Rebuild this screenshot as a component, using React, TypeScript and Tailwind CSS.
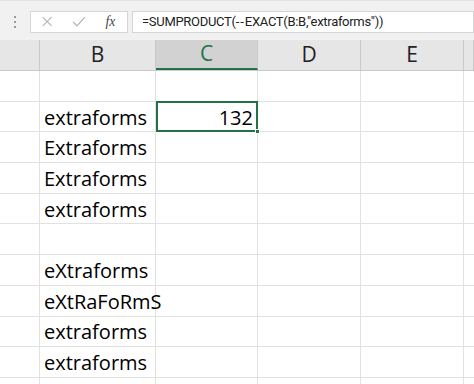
import React from "react";

const rows: { b: string; c?: string }[] = [
  { b: "" },
  { b: "extraforms", c: "132" },
  { b: "Extraforms" },
  { b: "Extraforms" },
  { b: "extraforms" },
  { b: "" },
  { b: "eXtraforms" },
  { b: "eXtRaFoRmS" },
  { b: "extraforms" },
  { b: "extraforms" },
  { b: "" },
];

const font = { fontFamily: '"Open Sans", "Noto Sans", sans-serif' };

const FormulaBar: React.FC = () => (
  <div className="h-[37px] bg-[#f1f1f1] border-t border-[#e4e4e4] flex items-start pt-[10px]">
    <div className="w-[30px] flex flex-col items-center gap-[3px] pt-[5px]">
      <span className="w-[2px] h-[2px] bg-[#9a9a9a]" />
      <span className="w-[2px] h-[2px] bg-[#9a9a9a]" />
      <span className="w-[2px] h-[2px] bg-[#9a9a9a]" />
    </div>
    <div className="w-[98px] h-[22px] bg-white border border-[#d6d6d6] flex items-center">
      <svg width="98" height="22" viewBox="0 0 98 22">
        <path d="M12 6 L21 15 M21 6 L12 15" stroke="#b5b5b5" strokeWidth="1.2" fill="none" />
        <path d="M43 11 L47 15 L55 6" stroke="#b5b5b5" strokeWidth="1.3" fill="none" />
        <text
          x="76"
          y="15.5"
          fontFamily='"Liberation Serif", serif'
          fontStyle="italic"
          fontSize="14"
          fill="#444"
        >
          fx
        </text>
      </svg>
    </div>
    <div
      className="ml-[4px] flex-1 h-[22px] bg-white border border-[#d6d6d6] pl-[9px] flex items-center text-[13px] tracking-[-0.3px] text-[#222] whitespace-nowrap"
      style={{ fontFamily: 'Roboto, "Open Sans", sans-serif' }}
    >
      =SUMPRODUCT(<span className="tracking-[1px]">--</span>EXACT(B:B,"extraforms"))
    </div>
  </div>
);

const cols = [
  { w: "w-[40px]", key: "A", label: "" },
  { w: "w-[116px]", key: "B", label: "B" },
  { w: "w-[102px]", key: "C", label: "C" },
  { w: "w-[103px]", key: "D", label: "D" },
  { w: "w-[103px]", key: "E", label: "E" },
  { w: "flex-1", key: "F", label: "" },
];

export default function App() {
  return (
    <div className="w-[474px] h-[384px] overflow-hidden bg-white" style={font}>
      <FormulaBar />
      <div className="h-[3px] bg-[#f1f1f1]" />
      <div className="flex h-[31px] bg-[#e6e6e6] border-b border-[#c8c8c8]">
        {cols.map((c) =>
          c.key === "C" ? (
            <div
              key={c.key}
              className={`${c.w} bg-[#d2d2d2] border-r border-[#c9c9c9] border-b-2 border-b-[#217346] flex items-center justify-center text-[21px] text-[#217346]`}
            >
              {c.label}
            </div>
          ) : (
            <div
              key={c.key}
              className={`${c.w} border-r border-[#c9c9c9] flex items-center justify-center text-[21px] text-[#222]`}
            >
              {c.label}
            </div>
          )
        )}
      </div>
      {rows.map((r, i) => (
        <div key={i} className="flex h-[30.7px] border-b border-[#e1e1e1]">
          <div className="w-[40px] border-r border-[#e1e1e1]" />
          <div className="w-[116px] border-r border-[#e1e1e1] pl-[4px] pt-[2px] flex items-center text-[20px] text-black whitespace-nowrap overflow-visible z-10">
            {r.b}
          </div>
          {r.c ? (
            <div className="w-[102px] relative -mt-px h-[calc(100%+2px)] border-2 border-[#217346] pt-[2px] flex items-center justify-end pr-[3px] text-[20px] text-black z-20">
              {r.c}
              <span className="absolute -right-[4px] -bottom-[4px] w-[5px] h-[5px] bg-[#217346] border border-white" />
            </div>
          ) : (
            <div className="w-[102px] border-r border-[#e1e1e1]" />
          )}
          <div className="w-[103px] border-r border-[#e1e1e1]" />
          <div className="w-[103px] border-r border-[#e1e1e1]" />
          <div className="flex-1" />
        </div>
      ))}
    </div>
  );
}
